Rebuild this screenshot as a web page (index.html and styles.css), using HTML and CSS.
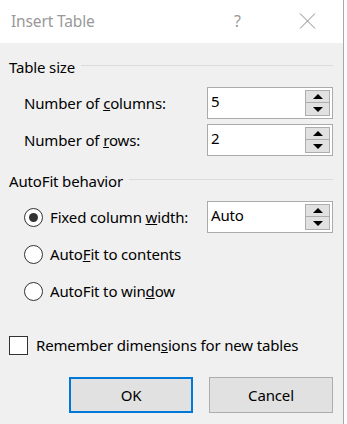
FILE: index.html
```html
<!DOCTYPE html>
<html>
<head>
<meta charset="utf-8">
<link rel="stylesheet" href="styles.css">
</head>
<body>
<div class="dialog">
  <div class="titlebar">
    <span class="title">Insert Table</span>
    <span class="help">?</span>
    <span class="close"><svg width="17" height="16" viewBox="0 0 17 16"><path d="M1 0.5 L16 15.5 M16 0.5 L1 15.5" stroke="#8c8c8c" stroke-width="1" fill="none"/></svg></span>
  </div>
  <div class="content">
    <div class="group-head first"><span class="gh-text">Table size</span><span class="rule"></span></div>
    <div class="field">
      <span class="label">Number of <u>c</u>olumns:</span>
      <div class="spinbox"><span class="val">5</span><div class="spinbtns"><span class="sb up"><i class="tri-up"></i></span><span class="sb down"><i class="tri-down"></i></span></div></div>
    </div>
    <div class="field second">
      <span class="label">Number of <u>r</u>ows:</span>
      <div class="spinbox"><span class="val">2</span><div class="spinbtns"><span class="sb up"><i class="tri-up"></i></span><span class="sb down"><i class="tri-down"></i></span></div></div>
    </div>
    <div class="group-head auto"><span class="gh-text">AutoFit behavior</span><span class="rule"></span></div>
    <div class="radio-row r1">
      <span class="radio checked"></span>
      <span class="rlabel fixed">Fixed column <u>w</u>idth:</span>
      <div class="spinbox auto-box"><span class="val">Auto</span><div class="spinbtns"><span class="sb up"><i class="tri-up"></i></span><span class="sb down"><i class="tri-down"></i></span></div></div>
    </div>
    <div class="radio-row r2">
      <span class="radio"></span>
      <span class="rlabel">Auto<u>F</u>it to contents</span>
    </div>
    <div class="radio-row r3">
      <span class="radio"></span>
      <span class="rlabel">AutoFit to win<u>d</u>ow</span>
    </div>
    <div class="check-row">
      <span class="checkbox"></span>
      <span class="clabel">Remember dimen<u>s</u>ions for new tables</span>
    </div>
    <div class="buttons">
      <button class="btn ok">OK</button>
      <button class="btn cancel">Cancel</button>
    </div>
  </div>
</div>
</body>
</html>
```
FILE: styles.css
```css
html, body {
  margin: 0;
  padding: 0;
  background: #ffffff;
}
body {
  font-family: "Noto Sans", "Open Sans", sans-serif;
  font-size: 15px;
  letter-spacing: -0.15px;
  color: #000;
}
.dialog {
  width: 343px;
  height: 424px;
  border-right: 1px solid #a8a8a8;
  display: flex;
  flex-direction: column;
  background: #f0f0f0;
}
.titlebar {
  height: 43px;
  background: #ffffff;
  display: flex;
  align-items: center;
  padding-left: 11px;
  flex-shrink: 0;
}
.title {
  color: #999999;
  font-size: 15.5px;
  flex: 1;
  margin-top: -1px;
}
.help {
  color: #999999;
  font-size: 16px;
  width: 8px;
  margin-right: 57px;
  margin-top: -1px;
}
.close {
  display: flex;
  margin-right: 27px;
  margin-top: -2px;
}
.content {
  flex: 1;
  display: flex;
  flex-direction: column;
  padding-right: 10px;
}
.group-head {
  display: flex;
  align-items: flex-start;
  height: 20px;
  line-height: 20px;
  padding-left: 9px;
}
.group-head.first { margin-top: 14px; }
.group-head.auto { margin-top: 15px; }
.gh-text { white-space: nowrap; }
.rule {
  flex: 1;
  height: 1px;
  background: #dcdcdc;
  margin-top: 8px;
  margin-left: 6px;
}
.field {
  display: flex;
  align-items: center;
  justify-content: space-between;
  height: 32px;
  margin-top: 10px;
  padding-left: 24px;
}
.field.second { margin-top: 5px; }
.label { white-space: nowrap; }
.spinbox {
  width: 124px;
  height: 30px;
  border: 1px solid #ababab;
  background: #ffffff;
  display: flex;
  align-items: center;
  justify-content: space-between;
  flex-shrink: 0;
}
.val {
  padding-left: 3px;
  margin-top: -4px;
}
.spinbtns {
  display: flex;
  flex-direction: column;
  margin-right: 2px;
}
.sb {
  width: 23px;
  height: 11px;
  border: 1px solid #adadad;
  background: #e1e1e1;
  display: flex;
  align-items: center;
  justify-content: center;
}
.sb.down { border-top: none; height: 12px; }
.tri-up {
  width: 0; height: 0;
  border-left: 5px solid transparent;
  border-right: 5px solid transparent;
  border-bottom: 5px solid #000;
}
.tri-down {
  width: 0; height: 0;
  border-left: 5px solid transparent;
  border-right: 5px solid transparent;
  border-top: 5px solid #000;
}
.radio-row {
  display: flex;
  align-items: center;
  height: 30px;
  padding-left: 24px;
}
.radio-row.r1 { margin-top: 11px; }
.radio-row.r2 { margin-top: 7px; }
.radio-row.r3 { margin-top: 7px; }
.radio {
  width: 17px;
  height: 17px;
  border: 1px solid #333333;
  border-radius: 50%;
  background: #ffffff;
  display: flex;
  align-items: center;
  justify-content: center;
  flex-shrink: 0;
}
.radio.checked::after {
  content: "";
  width: 9px;
  height: 9px;
  border-radius: 50%;
  background: #333333;
}
.rlabel {
  margin-left: 7px;
  white-space: nowrap;
}
.rlabel.fixed { flex: 1; }
.check-row {
  display: flex;
  align-items: center;
  height: 20px;
  margin-top: 29px;
  padding-left: 9px;
}
.checkbox {
  width: 17px;
  height: 17px;
  border: 1px solid #333333;
  background: #ffffff;
  flex-shrink: 0;
}
.clabel {
  margin-left: 8px;
  white-space: nowrap;
}
.buttons {
  display: flex;
  justify-content: flex-end;
  gap: 16px;
  margin-top: 22px;
}
.btn {
  width: 124px;
  height: 36px;
  font-family: inherit;
  font-size: 15px;
  letter-spacing: inherit;
  color: #000;
  background: #e1e1e1;
  border: 1px solid #adadad;
  padding: 0;
  margin: 0;
}
.btn.ok {
  border: 2px solid #0078d7;
}
```
